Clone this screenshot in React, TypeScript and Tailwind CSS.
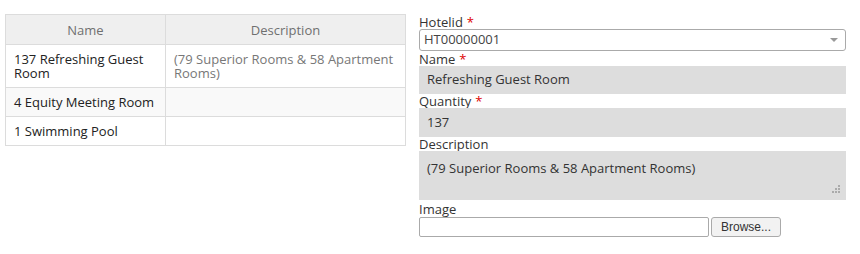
import React from 'react';

const rows = [
  { name: '137 Refreshing Guest Room', desc: '(79 Superior Rooms & 58 Apartment Rooms)' },
  { name: '4 Equity Meeting Room', desc: '' },
  { name: '1 Swimming Pool', desc: '' },
];

function Label({ text, required = false, h }: { text: string; required?: boolean; h: string }) {
  return (
    <div className={`${h} flex items-center text-[13px] leading-[14px] text-[#333]`}>
      {text}
      {required && <span className="ml-[4px] text-[#d00]">*</span>}
    </div>
  );
}

export default function App() {
  return (
    <div className="w-[860px] h-[254px] bg-white flex gap-[13px] font-['Open_Sans',sans-serif]">
      <div className="pl-[5px] pt-[14px]">
        <table className="w-[401px] border-collapse text-[13px] leading-[14px] table-fixed">
          <thead>
            <tr className="bg-[#efefef] h-[30px]">
              <th className="w-[160px] border border-[#dcdcdc] font-normal text-[#6f6f6f]">Name</th>
              <th className="border border-[#dcdcdc] font-normal text-[#6f6f6f]">Description</th>
            </tr>
          </thead>
          <tbody>
            {rows.map((r, i) => (
              <tr key={r.name} className={i % 2 === 1 ? 'bg-[#f9f9f9]' : 'bg-white'}>
                <td className="border border-[#dcdcdc] px-[8px] pt-[7px] pb-[7px] text-[#222] align-top">{r.name}</td>
                <td className="border border-[#dcdcdc] px-[8px] pt-[7px] pb-[7px] text-[#777] align-top">{r.desc}</td>
              </tr>
            ))}
          </tbody>
        </table>
      </div>

      <div className="w-[427px] pt-[15px] flex flex-col">
        <Label text="Hotelid" required h="h-[14px]" />
        <div className="h-[22px] border border-[#aaa] rounded-[3px] bg-white flex items-center justify-between pl-[4px] pr-[7px] text-[13px] text-[#444]">
          <span>HT00000001</span>
          <span className="w-0 h-0 border-x-[4px] border-x-transparent border-t-[4px] border-t-[#999]" />
        </div>
        <Label text="Name" required h="h-[15px]" />
        <div className="h-[28px] bg-[#dddddd] flex items-center pl-[8px] text-[13px] text-[#333]">
          Refreshing Guest Room
        </div>
        <Label text="Quantity" required h="h-[14px]" />
        <div className="h-[29px] bg-[#dddddd] flex items-center pl-[8px] text-[13px] text-[#333]">137</div>
        <Label text="Description" h="h-[14px]" />
        <div className="relative h-[49px] bg-[#dddddd] pl-[8px] pt-[9px] text-[13px] leading-[16px] text-[#333]">
          (79 Superior Rooms &amp; 58 Apartment Rooms)
          <svg className="absolute right-[5px] bottom-[6px]" width="11" height="10" viewBox="0 0 11 10">
            <rect x="8" y="1" width="2" height="2" fill="#aaa" />
            <rect x="5" y="4" width="2" height="2" fill="#aaa" />
            <rect x="8" y="4" width="2" height="2" fill="#aaa" />
            <rect x="2" y="7" width="2" height="2" fill="#aaa" />
            <rect x="5" y="7" width="2" height="2" fill="#aaa" />
            <rect x="8" y="7" width="2" height="2" fill="#aaa" />
          </svg>
        </div>
        <Label text="Image" h="h-[17px]" />
        <div className="flex gap-[2px] h-[20px]">
          <div className="w-[290px] border border-[#aaa] rounded-[2px] bg-white" />
          <button className="w-[70px] border border-[#aaa] rounded-[3px] bg-[#f2f2f2] text-[12px] text-[#333] font-['Liberation_Sans',sans-serif]">
            Browse...
          </button>
        </div>
      </div>
    </div>
  );
}
